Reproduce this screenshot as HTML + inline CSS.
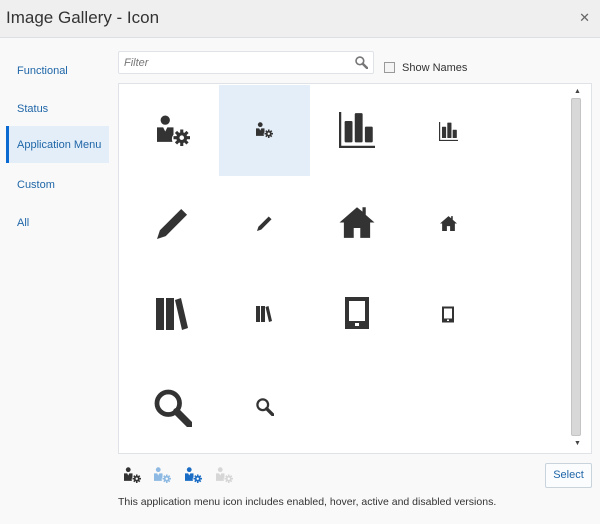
<!DOCTYPE html><html><head><style>
body{margin:0;width:600px;height:524px;background:#f9f9f9;font-family:"Liberation Sans",sans-serif;position:relative;overflow:hidden}
.hdr{position:absolute;left:0;top:0;width:600px;height:37px;background:#efefef;border-bottom:1px solid #dcdfe3}
.hdr h1{margin:0;position:absolute;left:6px;top:8px;font-size:17px;font-weight:normal;color:#333}
.x{position:absolute;right:10px;top:10px;color:#666;font-size:13px}
.nav div{position:absolute;left:6px;width:103px;height:37px;font-size:11px;color:#1f66a8;padding-left:11px;box-sizing:border-box;line-height:39px}
.nav .sel{background:#e4eef8;border-left:3px solid #0a6ad1;padding-left:8px}
.filter{position:absolute;left:118px;top:51px;width:256px;height:23px;background:#fff;border:1px solid #dfe3e7;border-radius:2px;box-sizing:border-box}
.filter span{position:absolute;left:5px;top:5px;font-size:11px;font-style:italic;color:#777}
.cb{position:absolute;left:384px;top:62px;width:9px;height:9px;border:1px solid #999;background:#f4f4f4}
.sn{position:absolute;left:402px;top:62px;font-size:11px;color:#333}
.grid{position:absolute;left:118px;top:83px;width:474px;height:371px;background:#fff;border:1px solid #dfe3e7;box-sizing:border-box}
.selc{position:absolute;left:219px;top:85px;width:91px;height:91px;background:#e4eef8}
svg.ic{position:absolute}
.sb{position:absolute;left:571px;top:98px;width:10px;height:338px;background:#d8d8d8;border:1px solid #c4c4c4;box-sizing:border-box;border-radius:2px}
.btn{position:absolute;left:545px;top:463px;width:47px;height:25px;border:1px solid #c9d3dc;border-radius:2px;background:#fafcfe;box-sizing:border-box;font-size:11px;color:#1f66a8;text-align:center;line-height:23px}
.desc{position:absolute;left:118px;top:496px;font-size:10.5px;color:#333}
</style></head><body>
<svg width="0" height="0" style="position:absolute"><defs>
<symbol id="pg" viewBox="0 0 32 32"><circle cx="8" cy="5" r="4.5"/><path d="M0 12h6l2 4 2-4h6v7a7 7 0 0 0 -1 7H0z"/><g transform="translate(24,22)"><path d="M0-8V8M-8 0H8M-5.6-5.6L5.6 5.6M-5.6 5.6L5.6-5.6" stroke="currentColor" stroke-width="3"/><circle r="5.3"/><circle r="2.2" fill="#fff"/></g></symbol>
<symbol id="bar" viewBox="0 0 32 32"><path d="M0 0h2v30h30v2H0z"/><rect x="5" y="8" width="7" height="19" rx="1"/><rect x="14" y="1" width="7" height="26" rx="1"/><rect x="23" y="13" width="7" height="14" rx="1"/></symbol>
<symbol id="pen" viewBox="0 0 32 32"><path d="M25 1l6 6L9 29 0 32l3-9z"/></symbol>
<symbol id="home" viewBox="0 0 32 32"><path d="M16 2L0 16h4v14h9v-9h6v9h9V16h4L24 9V2h-3v4z"/></symbol>
<symbol id="book" viewBox="0 0 32 32"><rect x="0" y="0" width="8" height="32"/><rect x="10" y="0" width="8" height="32"/><path d="M19 2l6-2 7 30-6 2z"/></symbol>
<symbol id="tab" viewBox="0 0 24 32"><path d="M0 0h24v32H0z M4 4v20h16V4z" fill-rule="evenodd"/><rect x="10" y="26" width="4" height="3" fill="#fff"/></symbol>
<symbol id="mag" viewBox="0 0 32 32"><circle cx="12" cy="12" r="9.5" fill="none" stroke="currentColor" stroke-width="4"/><path d="M19 19l11 11" stroke="currentColor" stroke-width="6" stroke-linecap="round"/></symbol>
</defs></svg>
<div class="hdr"><h1>Image Gallery - Icon</h1><span class="x">✕</span></div>
<div class="nav"><div style="top:52px">Functional</div><div style="top:90px">Status</div><div class="sel" style="top:126px">Application Menu</div><div style="top:166px">Custom</div><div style="top:204px">All</div></div>
<div class="filter"><span>Filter</span><svg style="position:absolute;right:5px;top:4px" width="13" height="13" viewBox="0 0 32 32" color="#777" fill="#777"><use href="#mag"/></svg></div>
<div class="cb"></div><div class="sn">Show Names</div>
<div class="grid"></div><div class="selc"></div>
<div>
<svg class="ic" style="left:157px;top:115px" width="33" height="33" color="#333" fill="#333"><use href="#pg"/></svg>
<svg class="ic" style="left:256px;top:122px" width="17" height="17" color="#333" fill="#333"><use href="#pg"/></svg>
<svg class="ic" style="left:339px;top:112px" width="36" height="36" fill="#333"><use href="#bar"/></svg>
<svg class="ic" style="left:439px;top:122px" width="19" height="19" fill="#333"><use href="#bar"/></svg>
<svg class="ic" style="left:157px;top:208px" width="31" height="31" fill="#333"><use href="#pen"/></svg>
<svg class="ic" style="left:257px;top:216px" width="15" height="15" fill="#333"><use href="#pen"/></svg>
<svg class="ic" style="left:339px;top:205px" width="36" height="35" fill="#333"><use href="#home"/></svg>
<svg class="ic" style="left:440px;top:215px" width="17" height="17" fill="#333"><use href="#home"/></svg>
<svg class="ic" style="left:156px;top:296px" width="32" height="36" fill="#333"><use href="#book"/></svg>
<svg class="ic" style="left:256px;top:305px" width="16" height="18" fill="#333"><use href="#book"/></svg>
<svg class="ic" style="left:345px;top:296px" width="24" height="34" fill="#333"><use href="#tab"/></svg>
<svg class="ic" style="left:442px;top:306px" width="12" height="17" fill="#333"><use href="#tab"/></svg>
<svg class="ic" style="left:154px;top:389px" width="38" height="38" color="#333"><use href="#mag"/></svg>
<svg class="ic" style="left:256px;top:398px" width="18" height="18" color="#333"><use href="#mag"/></svg>
</div>
<div class="sb"></div>
<div style="position:absolute;left:574px;top:88px;font-size:7px;color:#444">▲</div>
<div style="position:absolute;left:574px;top:440px;font-size:7px;color:#444">▼</div>
<svg class="ic" style="left:124px;top:467px" width="17" height="17" color="#333" fill="#333"><use href="#pg"/></svg>
<svg class="ic" style="left:154px;top:467px" width="17" height="17" color="#8db9e2" fill="#8db9e2"><use href="#pg"/></svg>
<svg class="ic" style="left:185px;top:467px" width="17" height="17" color="#1a6cc4" fill="#1a6cc4"><use href="#pg"/></svg>
<svg class="ic" style="left:216px;top:467px" width="17" height="17" color="#d6d6d6" fill="#d6d6d6"><use href="#pg"/></svg>
<div class="btn">Select</div>
<div class="desc">This application menu icon includes enabled, hover, active and disabled versions.</div>
</body></html>
